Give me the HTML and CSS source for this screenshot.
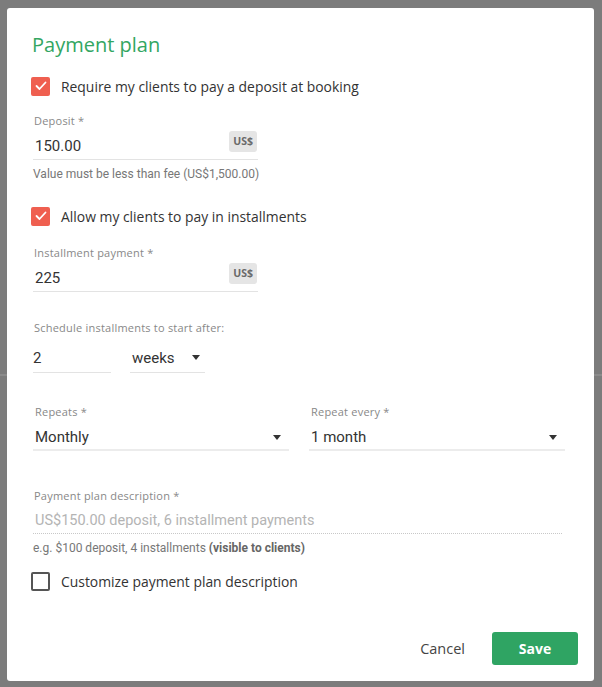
FILE: index.html
```html
<!DOCTYPE html>
<html>

<head>
    <title>Payment plan</title>
    <link rel="stylesheet" href="styles.css">
</head>

<body>
    <div class="backdrop">
        <div class="dialog">
            <h2 class="title">Payment plan</h2>

            <label class="check check-first">
                <span class="box checked">
                    <svg width="12" height="10" viewBox="0 0 12 10"><polyline points="1.5,5 4.5,8 10.5,1.5" fill="none" stroke="#fff" stroke-width="1.8" stroke-linecap="round" stroke-linejoin="round" /></svg>
                </span>
                Require my clients to pay a deposit at booking
            </label>

            <div class="field field-deposit">
                <div class="field-label">Deposit *</div>
                <div class="money-row">
                    <span class="value">150.00</span>
                    <span class="badge">US$</span>
                </div>
                <div class="hint">Value must be less than fee (US$1,500.00)</div>
            </div>

            <label class="check check-second">
                <span class="box checked">
                    <svg width="12" height="10" viewBox="0 0 12 10"><polyline points="1.5,5 4.5,8 10.5,1.5" fill="none" stroke="#fff" stroke-width="1.8" stroke-linecap="round" stroke-linejoin="round" /></svg>
                </span>
                Allow my clients to pay in installments
            </label>

            <div class="field field-installment">
                <div class="field-label">Installment payment *</div>
                <div class="money-row">
                    <span class="value">225</span>
                    <span class="badge">US$</span>
                </div>
            </div>

            <div class="field field-schedule">
                <div class="field-label">Schedule installments to start after:</div>
                <div class="schedule-row">
                    <div class="small-input"><span class="value">2</span></div>
                    <div class="small-select"><span class="value">weeks</span><span class="arrow"></span></div>
                </div>
            </div>

            <div class="repeat-row">
                <div class="field">
                    <div class="field-label">Repeats *</div>
                    <div class="select"><span class="value">Monthly</span><span class="arrow"></span></div>
                </div>
                <div class="field">
                    <div class="field-label">Repeat every *</div>
                    <div class="select"><span class="value">1 month</span><span class="arrow"></span></div>
                </div>
            </div>

            <div class="field field-desc">
                <div class="field-label">Payment plan description *</div>
                <div class="desc-input"><span class="value muted">US$150.00 deposit, 6 installment payments</span></div>
                <div class="hint">e.g. $100 deposit, 4 installments <b>(visible to clients)</b></div>
            </div>

            <label class="check check-third">
                <span class="box"></span>
                Customize payment plan description
            </label>

            <div class="footer">
                <button class="btn-cancel">Cancel</button>
                <button class="btn-save">Save</button>
            </div>
        </div>
    </div>
</body>

</html>
```

FILE: styles.css
```css
body {
    margin: 0;
    background: linear-gradient(to bottom, #7c7c7c 374px, #8b8b8b 374px, #8b8b8b 376px, #7c7c7c 376px);
    font-family: "Open Sans", "Liberation Sans", sans-serif;
    color: #333;
}

.backdrop {
    padding: 8px 8px 6px 7px;
    height: 687px;
    box-sizing: border-box;
}

.dialog {
    background: #fff;
    border-radius: 3px;
    width: 587px;
    height: 673px;
    box-sizing: border-box;
    padding: 25px 16px 0 25px;
    display: flex;
    flex-direction: column;
}

.title {
    margin: 0;
    font-size: 20px;
    line-height: 24px;
    font-weight: 400;
    color: #33a662;
}

.check {
    display: flex;
    align-items: center;
    height: 20px;
    font-size: 13.9px;
    color: #333;
    gap: 11px;
    margin-left: -1px;
}

.check-first {
    margin-top: 19px;
}

.check-second {
    margin-top: 24px;
}

.check-third {
    margin-top: 15px;
}

.box {
    width: 19px;
    height: 19px;
    box-sizing: border-box;
    border: 2px solid #555;
    border-radius: 2px;
    display: flex;
    align-items: center;
    justify-content: center;
}

.box.checked {
    background: #ef5f50;
    border-color: #ef5f50;
}

.field-label {
    font-size: 11px;
    line-height: 14px;
    letter-spacing: 0.22px;
    color: #888;
    margin-left: 2px;
}

.value {
    font-family: Roboto, "Liberation Sans", sans-serif;
    font-size: 15px;
    line-height: 22px;
    color: #333;
}

.value.muted {
    color: #b4b4b4;
}

.field-deposit {
    margin-top: 18px;
}

.field-installment {
    margin-top: 20px;
}

.field-schedule {
    margin-top: 29px;
}

.money-row {
    width: 223px;
    display: flex;
    justify-content: space-between;
    align-items: flex-start;
    padding: 3px 0 2px 2px;
    border-bottom: 1px solid #e3e3e3;
    margin-left: 1px;
}

.money-row .value {
    margin-top: 4px;
}

.badge {
    background: #e5e5e5;
    color: #6a6a6a;
    font-size: 10.5px;
    font-weight: 700;
    line-height: 21px;
    padding: 0 4px;
    border-radius: 3px;
    margin-right: 1px;
}

.hint {
    margin-top: 6px;
    margin-left: 1px;
    font-family: Roboto, "Liberation Sans", sans-serif;
    font-size: 12px;
    line-height: 16px;
    color: #777;
}

.hint b {
    color: #666;
}

.schedule-row {
    display: flex;
    gap: 19px;
    margin-left: 1px;
}

.small-input,
.small-select {
    padding-top: 11px;
    padding-bottom: 3px;
    border-bottom: 1px solid #e3e3e3;
}

.small-input {
    width: 78px;
}

.small-select {
    width: 75px;
    display: flex;
    align-items: center;
    padding-left: 2px;
    box-sizing: border-box;
    gap: 17px;
}

.arrow {
    width: 0;
    height: 0;
    border-left: 4px solid transparent;
    border-right: 4px solid transparent;
    border-top: 5px solid #333;
}

.repeat-row {
    display: flex;
    gap: 20px;
    margin-top: 32px;
    margin-left: 1px;
}

.repeat-row .field {
    width: 256px;
}

.select {
    display: flex;
    align-items: center;
    justify-content: space-between;
    padding: 7px 8px 1px 2px;
    border-bottom: 2px solid #ececec;
}

.field-desc {
    margin-top: 38px;
}

.desc-input {
    width: 527px;
    margin-left: 1px;
    padding: 5px 0 1px 2px;
    border-bottom: 1px dotted #c8c8c8;
}

.desc-input .value {
    font-size: 14.5px;
}

.footer {
    margin-top: auto;
    margin-bottom: 16px;
    display: flex;
    justify-content: flex-end;
    align-items: center;
    gap: 27px;
}

.btn-cancel {
    border: none;
    background: none;
    font-family: "Open Sans", "Liberation Sans", sans-serif;
    font-size: 14.5px;
    color: #444;
    padding: 0;
    cursor: pointer;
}

.btn-save {
    width: 86px;
    height: 33px;
    border: none;
    border-radius: 3px;
    background: #2fa463;
    color: #fff;
    font-family: "Open Sans", "Liberation Sans", sans-serif;
    font-size: 14px;
    font-weight: 700;
    cursor: pointer;
}
```
